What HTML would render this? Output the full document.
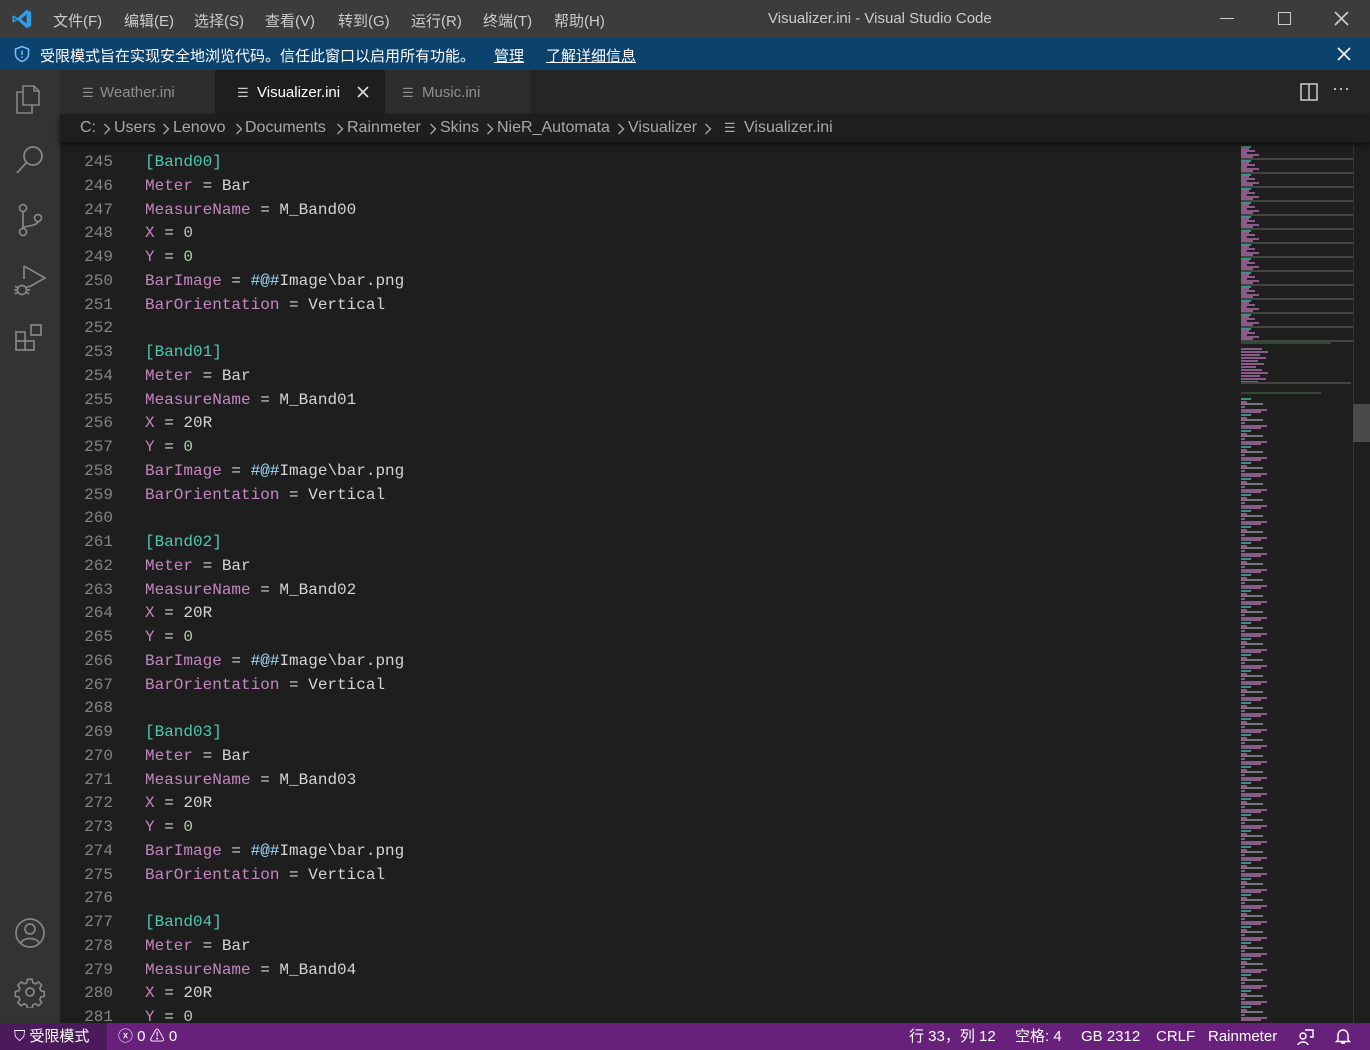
<!DOCTYPE html>
<html><head><meta charset="utf-8">
<style>
*{margin:0;padding:0;box-sizing:border-box}
body{width:1370px;height:1050px;overflow:hidden;background:#1e1e1e;font-family:"Liberation Sans","Noto Sans CJK SC",sans-serif;color:#ccc;position:relative}
.abs{position:absolute}
#title{left:0;top:0;width:1370px;height:38px;background:#3c3c3c}
#title .m{position:absolute;top:10px;font-size:15px;color:#ccc}
#banner{left:0;top:38px;width:1370px;height:32px;background:#0b426e;color:#fff;font-size:15px}
#act{left:0;top:70px;width:60px;height:953px;background:#333}
#tabs{left:60px;top:70px;width:1310px;height:44px;background:#252526}
.tab{position:absolute;top:0;height:44px;background:#2d2d2d;color:#8f8f8f;font-size:15px;line-height:46px}
#bc{left:60px;top:114px;width:1310px;height:28px;background:#1e1e1e;font-size:16px;color:#a9a9a9;line-height:28px;box-shadow:0 3px 4px #111;z-index:2}
#bc span{position:absolute;top:0}
#bc svg{position:absolute;top:9px}
#code{left:60px;top:142px;width:1175px;height:881px;overflow:hidden;font-family:"Liberation Mono",monospace;font-size:16px}
.ln{position:absolute;left:0;width:53px;text-align:right;color:#858585}
.cd{position:absolute;left:85px;white-space:pre;color:#d4d4d4}
.k{color:#c586c0}.s{color:#4ec9b0}.n{color:#b5cea8}.v{color:#9cdcfe}
#status{left:0;top:1023px;width:1370px;height:27px;background:#68217a;color:#fff;font-size:15px;line-height:27px}
</style></head><body>
<div id="title" class="abs">
<svg class="abs" style="left:11px;top:8px" width="22" height="22" viewBox="0 0 24 24"><path d="M17 2 L22 4.5 V19.5 L17 22 L7 13 L3 16 L1.5 15 V9 L3 8 L7 11 L17 2 Z M17 7 L11 12 L17 17 Z M3.5 10 V14 L5.5 12 Z" fill="#2d9ee8"/></svg>
<span class="m" style="left:53px">文件(F)</span><span class="m" style="left:124px">编辑(E)</span><span class="m" style="left:194px">选择(S)</span><span class="m" style="left:265px">查看(V)</span><span class="m" style="left:338px">转到(G)</span><span class="m" style="left:411px">运行(R)</span><span class="m" style="left:483px">终端(T)</span><span class="m" style="left:554px">帮助(H)</span>
<span class="m" style="left:768px">Visualizer.ini - Visual Studio Code</span>
<div class="abs" style="left:1220px;top:18px;width:14px;height:1px;background:#ccc"></div>
<div class="abs" style="left:1278px;top:12px;width:13px;height:13px;border:1.5px solid #ccc"></div>
<svg class="abs" style="left:1334px;top:11px" width="15" height="15"><path d="M1 1L14 14M14 1L1 14" stroke="#ccc" stroke-width="1.6"/></svg>
</div>
<div id="banner" class="abs">
<svg class="abs" style="left:13px;top:7px" width="18" height="18" viewBox="0 0 18 18"><path d="M9 1.5 L15.5 4 V9 C15.5 13 12 15.5 9 16.5 C6 15.5 2.5 13 2.5 9 V4 Z" fill="none" stroke="#75beff" stroke-width="1.5"/><path d="M9 5.5V10M9 11.5V13" stroke="#75beff" stroke-width="1.5"/></svg>
<span class="abs" style="left:40px;top:7px">受限模式旨在实现安全地浏览代码。信任此窗口以启用所有功能。</span>
<span class="abs" style="left:494px;top:7px;text-decoration:underline">管理</span>
<span class="abs" style="left:546px;top:7px;text-decoration:underline">了解详细信息</span>
<svg class="abs" style="left:1337px;top:9px" width="14" height="14"><path d="M1 1L13 13M13 1L1 13" stroke="#fff" stroke-width="1.6"/></svg>
</div>
<div id="act" class="abs">
<svg class="abs" style="left:14px;top:12px" width="32" height="34" viewBox="0 0 32 34" fill="none" stroke="#858585" stroke-width="1.6"><path d="M9 4h11l5 5v14H9z M20 4v5h5"/><path d="M9 10H3v21h15v-8"/></svg>
<svg class="abs" style="left:14px;top:72px" width="32" height="34" viewBox="0 0 32 34" fill="none" stroke="#858585" stroke-width="1.8"><circle cx="19" cy="14" r="9"/><path d="M12.5 20.5L3 31"/></svg>
<svg class="abs" style="left:14px;top:132px" width="32" height="36" viewBox="0 0 32 36" fill="none" stroke="#858585" stroke-width="1.7"><circle cx="9" cy="6" r="3.5"/><circle cx="9" cy="30" r="3.5"/><circle cx="24" cy="16" r="3.5"/><path d="M9 9.5v17M24 19.5c0 5-15 4-15 7"/></svg>
<svg class="abs" style="left:12px;top:192px" width="36" height="36" viewBox="0 0 36 36" fill="none" stroke="#858585" stroke-width="1.7"><path d="M12 4L33 16L17 25"/><path d="M12 4v13"/><circle cx="10" cy="28" r="4.5"/><path d="M3 24l3 2M3 32l3-2M17 24l-3 2M17 32l-3-2M2 28h3.5M14.5 28H18"/></svg>
<svg class="abs" style="left:14px;top:252px" width="34" height="34" viewBox="0 0 34 34" fill="none" stroke="#858585" stroke-width="1.7"><path d="M2 10h9v9H2zM2 19h9v9H2zM11 19h9v9h-9z"/><path d="M17 3h10v10H17z"/></svg>
<svg class="abs" style="left:14px;top:847px" width="32" height="32" viewBox="0 0 32 32" fill="none" stroke="#858585" stroke-width="1.7"><circle cx="16" cy="16" r="14"/><circle cx="16" cy="12" r="5"/><path d="M7 26c2-6 16-6 18 0"/></svg>
<svg class="abs" style="left:14px;top:906px" width="32" height="32" viewBox="0 0 32 32" fill="none" stroke="#858585" stroke-width="1.8"><path d="M13.5 2.5h5l.8 3.8 2.8 1.2 3.2-2.1 3.5 3.5-2.1 3.2 1.2 2.8 3.6.8v5l-3.6.8-1.2 2.8 2.1 3.2-3.5 3.5-3.2-2.1-2.8 1.2-.8 3.6h-5l-.8-3.6-2.8-1.2-3.2 2.1-3.5-3.5 2.1-3.2-1.2-2.8-3.6-.8v-5l3.6-.8 1.2-2.8-2.1-3.2 3.5-3.5 3.2 2.1 2.8-1.2z" transform="scale(0.93) translate(1,1)"/><circle cx="16" cy="16" r="4"/></svg>
</div>
<div id="tabs" class="abs">
<div class="tab" style="left:0;width:155px"><span style="position:absolute;left:22px;font-size:13px">☰</span><span style="position:absolute;left:40px">Weather.ini</span></div>
<div class="tab" style="left:155px;width:170px;background:#1e1e1e;color:#fff"><span style="position:absolute;left:22px;font-size:13px;color:#ccc">☰</span><span style="position:absolute;left:42px">Visualizer.ini</span><svg style="position:absolute;left:142px;top:16px" width="12" height="12"><path d="M1 1L11 11M11 1L1 11" stroke="#ddd" stroke-width="1.6"/></svg></div>
<div class="tab" style="left:325px;width:145px"><span style="position:absolute;left:17px;font-size:13px">☰</span><span style="position:absolute;left:37px">Music.ini</span></div>
<svg class="abs" style="left:1240px;top:13px" width="18" height="18"><rect x="1" y="1" width="16" height="16" fill="none" stroke="#ccc" stroke-width="1.5"/><path d="M9 1v16" stroke="#ccc" stroke-width="1.5"/></svg>
<span class="abs" style="left:1272px;top:8px;font-size:18px;color:#ccc">···</span>
</div>
<div id="bc" class="abs"></div>
<div id="code" class="abs"></div>
<div id="mini" class="abs" style="left:1238px;top:142px;width:115px;height:881px"></div>
<div class="abs" style="left:1353px;top:142px;width:17px;height:881px;background:#1e1e1e;border-left:1px solid #333"></div>
<div class="abs" style="left:1353px;top:404px;width:17px;height:38px;background:#4a4a4a"></div>
<div id="status" class="abs">
<div class="abs" style="left:0;top:0;width:107px;height:27px;background:#4b1a5a"></div>
<span class="abs" style="left:14px">⛉ 受限模式</span>
<span class="abs" style="left:118px">ⓧ 0 ⚠ 0</span>
<span class="abs" style="left:909px">行 33，列 12</span>
<span class="abs" style="left:1015px">空格: 4</span>
<span class="abs" style="left:1081px">GB 2312</span>
<span class="abs" style="left:1156px">CRLF</span>
<span class="abs" style="left:1208px">Rainmeter</span>
<svg class="abs" style="left:1296px;top:5px" width="18" height="18" fill="none" stroke="#fff" stroke-width="1.4"><circle cx="7" cy="8" r="3"/><path d="M2 17c1-4 9-4 10 0M9 2h8v7h-3"/></svg>
<svg class="abs" style="left:1335px;top:4px" width="16" height="18" fill="none" stroke="#fff" stroke-width="1.4"><path d="M3 13V8a5 5 0 0110 0v5l1.5 1.5h-13zM6 16h4"/></svg>
</div>
<script>
var bc=document.getElementById('bc'),bh='';
var items=[['C:',20],['Users',54],['Lenovo',113],['Documents',185],['Rainmeter',287],['Skins',380],['NieR_Automata',437],['Visualizer',568]];
var chev=[43,102,175,276,369,426,557,644];
items.forEach(function(it){bh+='<span style="left:'+it[1]+'px">'+it[0]+'</span>';});
chev.forEach(function(x){bh+='<svg style="left:'+x+'px" width="8" height="12"><path d="M1.5 1L6.5 6L1.5 11" fill="none" stroke="#aaa" stroke-width="1.3"/></svg>';});
bh+='<span style="left:664px;font-size:13px">☰</span><span style="left:684px">Visualizer.ini</span>';
bc.innerHTML=bh;
var c=document.getElementById('code'),h='';
var L=[];
L.push([244,'']);
for(var b=0;b<5;b++){var n=245+b*8,id='0'+b,x=b==0?'0':'20R';
L.push([n,'<span class="s">[Band'+id+']</span>']);
L.push([n+1,'<span class="k">Meter</span> = Bar']);
L.push([n+2,'<span class="k">MeasureName</span> = M_Band'+id]);
L.push([n+3,'<span class="k">X</span> = '+(x=='0'?'<span class="n">0</span>':x)]);
L.push([n+4,'<span class="k">Y</span> = <span class="n">0</span>']);
L.push([n+5,'<span class="k">BarImage</span> = <span class="v">#@#</span>Image\\bar.png']);
L.push([n+6,'<span class="k">BarOrientation</span> = Vertical']);
L.push([n+7,'']);}
for(var i=0;i<L.length;i++){if(L[i][0]>281)break;var t=(L[i][0]-245)*23.75+11;
h+='<div class="ln" style="top:'+t+'px">'+L[i][0]+'</div><div class="cd" style="top:'+t+'px">'+L[i][1]+'</div>';}
c.innerHTML=h;
var m=document.getElementById('mini'),s='';
function bar(x,y,w,col){s+='<div style="position:absolute;left:'+x+'px;top:'+y+'px;width:'+w+'px;height:1.5px;background:'+col+'"></div>';}
for(var y=4;y<200;y+=14){bar(3,y,10,'#3d8f80');bar(3,y+2,8,'#8a5a88');bar(3,y+4,14,'#8a5a88');bar(3,y+6,6,'#8a5a88');bar(3,y+8,18,'#8a5a88');bar(3,y+10,12,'#8a5a88');bar(3,y+12,115,'#444');}
bar(3,200,90,'#2f4a2f');
for(var y=206;y<240;y+=3)bar(3,y,15+(y%7)*2,'#8a5a88');
bar(3,240,110,'#444');bar(3,250,80,'#2f4a2f');
for(var y=256;y<878;y+=16){bar(3,y,10,'#3d8f80');bar(3,y+3,6,'#8a5a88');bar(3,y+5,22,'#777');bar(3,y+8,4,'#8a5a88');bar(3,y+11,26,'#8a5a88');bar(3,y+13,20,'#8a5a88');}
m.innerHTML=s;
</script>
</body></html>
